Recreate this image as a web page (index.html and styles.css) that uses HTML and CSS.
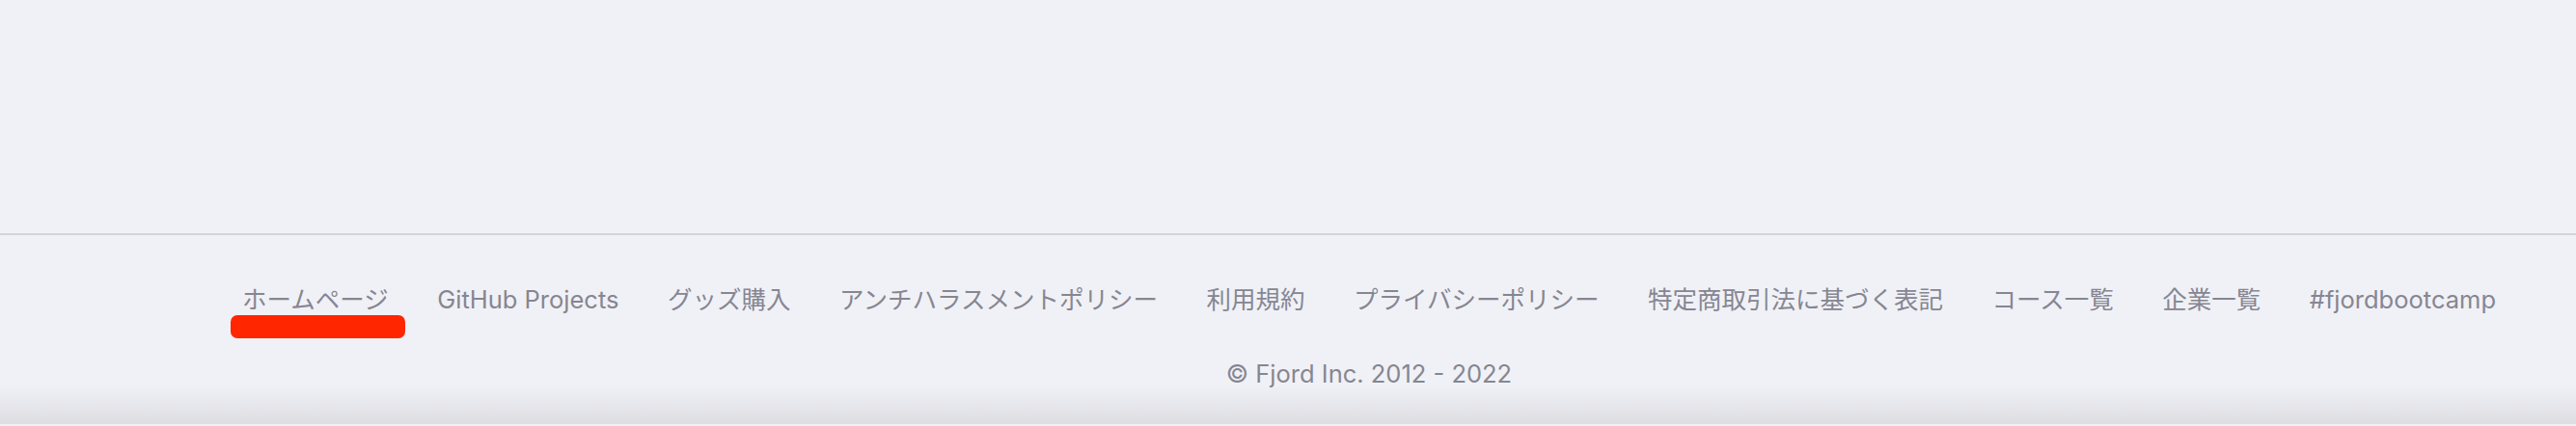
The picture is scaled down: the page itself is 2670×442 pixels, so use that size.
FILE: index.html
```html
<!DOCTYPE html>
<html lang="ja">
<head>
<meta charset="utf-8">
<title>Footer</title>
<link rel="stylesheet" href="styles.css">
</head>
<body>
<div class="page-body"></div>
<footer class="footer">
  <nav class="footer-nav">
    <ul class="footer-links">
      <li class="footer-item"><a class="footer-link is-marked" href="#">ホームページ<span class="marker"></span></a></li>
      <li class="footer-item"><a class="footer-link" href="#">GitHub Projects</a></li>
      <li class="footer-item"><a class="footer-link" href="#">グッズ購入</a></li>
      <li class="footer-item"><a class="footer-link" href="#">アンチハラスメントポリシー</a></li>
      <li class="footer-item"><a class="footer-link" href="#">利用規約</a></li>
      <li class="footer-item"><a class="footer-link" href="#">プライバシーポリシー</a></li>
      <li class="footer-item"><a class="footer-link" href="#">特定商取引法に基づく表記</a></li>
      <li class="footer-item"><a class="footer-link" href="#">コース一覧</a></li>
      <li class="footer-item"><a class="footer-link" href="#">企業一覧</a></li>
      <li class="footer-item"><a class="footer-link" href="#">#fjordbootcamp</a></li>
    </ul>
  </nav>
  <p class="copyright">© Fjord Inc. 2012 - 2022</p>
</footer>
</body>
</html>
```

FILE: styles.css
```css
html, body {
  margin: 0;
  padding: 0;
}
body {
  background: #f0f1f6;
  font-family: "Inter", "Noto Sans CJK JP", sans-serif;
  color: #868692;
  width: 2670px;
  height: 442px;
  overflow: hidden;
}
.page-body {
  height: 242px;
}
.footer {
  border-top: 2px solid #d3d4da;
  height: 198px;
  padding-left: 168px;
  box-sizing: border-box;
  background: linear-gradient(to bottom, #f0f1f6 0, #f0f1f6 155px, #dcdce1 198px);
}
.footer-nav {
  padding-top: 47px;
}
.footer-links {
  list-style: none;
  margin: 0;
  padding: 0;
  display: flex;
  justify-content: center;
  gap: 50.5px;
}
.footer-item {
  font-size: 25.5px;
  line-height: 40px;
}
.footer-link {
  color: #868692;
  text-decoration: none;
}
.is-marked {
  position: relative;
}
.marker {
  position: absolute;
  left: -12px;
  right: -17px;
  top: 32px;
  height: 24px;
  background: #ff2600;
  border-radius: 7px;
}
.copyright {
  margin: 37px 0 0;
  text-align: center;
  font-size: 25.5px;
  line-height: 40px;
}
```
